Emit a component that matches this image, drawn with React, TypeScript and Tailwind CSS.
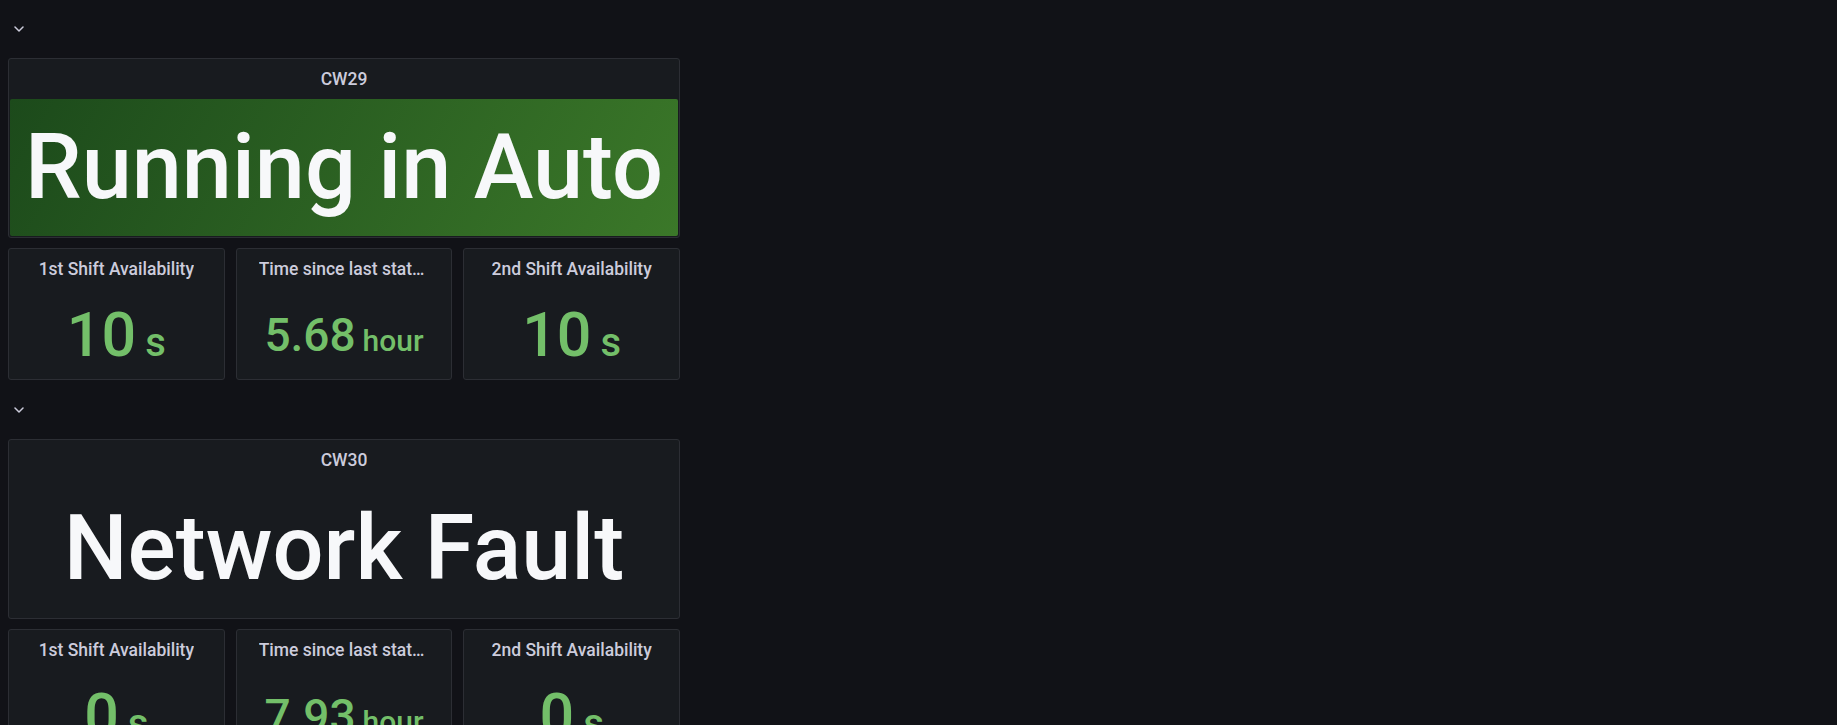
import React from 'react'

type Stat = {
  title: string
  value: string
  unit: string
  size: string
  unitSize: string
  unitGap: string
}

type Machine = {
  name: string
  status: string
  running: boolean
  stats: Stat[]
}

const MACHINES: Machine[] = [
  {
    name: 'CW29',
    status: 'Running in Auto',
    running: true,
    stats: [
      { title: '1st Shift Availability', value: '10', unit: 's', size: 'text-[61px]', unitSize: 'text-[40px]', unitGap: 'ml-[9px]' },
      { title: 'Time since last status change', value: '5.68', unit: 'hour', size: 'text-[46px]', unitSize: 'text-[30px]', unitGap: 'ml-[7px]' },
      { title: '2nd Shift Availability', value: '10', unit: 's', size: 'text-[61px]', unitSize: 'text-[40px]', unitGap: 'ml-[9px]' },
    ],
  },
  {
    name: 'CW30',
    status: 'Network Fault',
    running: false,
    stats: [
      { title: '1st Shift Availability', value: '0', unit: 's', size: 'text-[61px]', unitSize: 'text-[40px]', unitGap: 'ml-[9px]' },
      { title: 'Time since last status change', value: '7.93', unit: 'hour', size: 'text-[46px]', unitSize: 'text-[30px]', unitGap: 'ml-[7px]' },
      { title: '2nd Shift Availability', value: '0', unit: 's', size: 'text-[61px]', unitSize: 'text-[40px]', unitGap: 'ml-[9px]' },
    ],
  },
]

function RowHeader() {
  return (
    <div className="h-[39px] flex items-center pl-[6px]">
      <svg width="10" height="6" viewBox="0 0 10 6" fill="none">
        <polyline points="1,1 5,5 9,1" stroke="#ccccdc" strokeWidth="1.5" strokeLinecap="round" strokeLinejoin="round" />
      </svg>
    </div>
  )
}

function PanelTitle({ children }: { children: React.ReactNode }) {
  return (
    <div className="h-[40px] shrink-0 flex items-center justify-center px-[22px]">
      <span className="truncate text-[17.5px] font-medium text-[#ccccdc]">{children}</span>
    </div>
  )
}

function StatusPanel({ m }: { m: Machine }) {
  return (
    <div className="h-[180px] flex flex-col bg-[#181b1f] border border-[#2c2e34] rounded-[3px]">
      <PanelTitle>{m.name}</PanelTitle>
      <div className="flex-1 flex px-[1px] pb-[1px]">
        <div
          className={
            m.running
              ? 'flex-1 flex items-center justify-center rounded-[2px] bg-[linear-gradient(120deg,#1c4a1b,#3b7829)]'
              : 'flex-1 flex items-center justify-center'
          }
        >
          <span className="text-[90px] leading-none font-medium text-[#f7f8fa] whitespace-nowrap">{m.status}</span>
        </div>
      </div>
    </div>
  )
}

function StatPanel({ s }: { s: Stat }) {
  return (
    <div className="h-[132px] min-w-0 flex flex-col bg-[#181b1f] border border-[#2c2e34] rounded-[3px]">
      <PanelTitle>{s.title}</PanelTitle>
      <div className="flex-1 flex items-center justify-center pt-[2px]">
        <div className="flex items-baseline leading-none font-medium text-[#73bf69]">
          <span className={s.size}>{s.value}</span>
          <span className={`${s.unitSize} ${s.unitGap}`}>{s.unit}</span>
        </div>
      </div>
    </div>
  )
}

export default function App() {
  return (
    <div className="min-h-screen w-full bg-[#111217] font-['Roboto',sans-serif]">
      <div className="w-[672px] ml-[8px] pt-[9px] flex flex-col gap-[10px]">
        {MACHINES.map(m => (
          <React.Fragment key={m.name}>
            <RowHeader />
            <StatusPanel m={m} />
            <div className="grid grid-cols-3 gap-[11px]">
              {m.stats.map((s, i) => (
                <StatPanel key={i} s={s} />
              ))}
            </div>
          </React.Fragment>
        ))}
      </div>
    </div>
  )
}
